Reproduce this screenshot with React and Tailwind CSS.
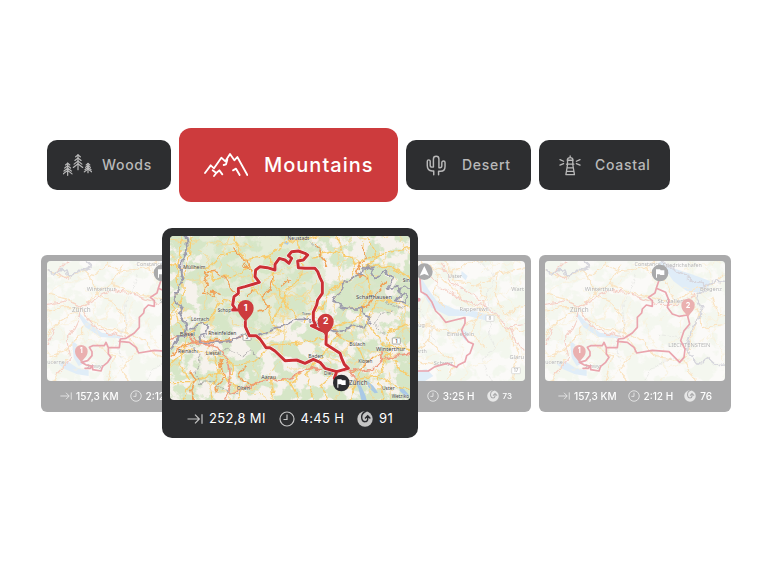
import React from 'react';

/* ---------- helpers for the map drawings ---------- */

function seeded(seed) {
  let s = seed;
  return () => {
    s = (s * 16807) % 2147483647;
    return s / 2147483647;
  };
}

// Short wandering lanes that fill the space between the main roads.
function lanes(seed, count, width, height) {
  const rnd = seeded(seed);
  const out = [];
  for (let i = 0; i < count; i++) {
    let x = rnd() * width;
    let y = rnd() * height;
    let angle = rnd() * Math.PI * 2;
    let d = `M${x.toFixed(0)} ${y.toFixed(0)}`;
    const steps = 4 + Math.floor(rnd() * 6);
    for (let k = 0; k < steps; k++) {
      angle += (rnd() - 0.5) * 1.3;
      x += Math.cos(angle) * 16;
      y += Math.sin(angle) * 16;
      d += `L${x.toFixed(0)} ${y.toFixed(0)}`;
    }
    out.push(d);
  }
  return out.join('');
}

const MAIN_LANES = lanes(77, 85, 720, 492);
const SIDE_LANES = lanes(431, 50, 540, 360);

function MapDefs({ id, frequency }) {
  return (
    <defs>
      <filter id={`${id}-woods`} x="0" y="0" width="100%" height="100%" colorInterpolationFilters="sRGB">
        <feTurbulence type="fractalNoise" baseFrequency={frequency} numOctaves="5" seed="8" result="n" />
        <feColorMatrix in="n" type="matrix" values="0 0 0 0 0.84  0 0 0 0 0.9  0 0 0 0 0.78  11 0 0 0 -4.9" result="g" />
        <feComposite in="g" in2="SourceAlpha" operator="in" />
      </filter>
      <filter id={`${id}-wave`} x="-5%" y="-5%" width="110%" height="110%" colorInterpolationFilters="sRGB">
        <feTurbulence type="fractalNoise" baseFrequency="0.04" numOctaves="3" seed="4" />
        <feDisplacementMap in="SourceGraphic" scale="24" xChannelSelector="R" yChannelSelector="G" />
      </filter>
    </defs>
  );
}

function Pin({ x, y, n, r = 24 }) {
  return (
    <g transform={`translate(${x} ${y})`}>
      <path d={`M0 ${r * 1.85}C${-r * 0.2} ${r * 1.2} ${-r} ${r * 0.9} ${-r} 0A${r} ${r} 0 0 1 ${r} 0C${r} ${r * 0.9} ${r * 0.2} ${r * 1.2} 0 ${r * 1.85}Z`} fill="#cd3b3d" />
      <text y={r * 0.34} textAnchor="middle" fontSize={r * 1.1} fontWeight="700" fill="#fff" fontFamily="Inter, sans-serif">{n}</text>
    </g>
  );
}

function FlagMarker({ x, y }) {
  return (
    <g transform={`translate(${x} ${y})`}>
      <circle r="25" fill="#2c2d30" />
      <path d="M-12 14V-11H0l2 3H13V6H1L-1 4H-9V14Z" fill="#fff" />
    </g>
  );
}

function Badge({ x, y, n, w = 24 }) {
  return (
    <g transform={`translate(${x} ${y})`}>
      <rect x={-w / 2} y="-9" width={w} height="18" rx="2" fill="#fff" stroke="#8b8b86" strokeWidth="2" />
      <text y="5" textAnchor="middle" fontSize="13" fontWeight="700" fill="#555">{n}</text>
    </g>
  );
}

function Labels({ items, fill = '#404040' }) {
  return (
    <g fontFamily="'Noto Sans', sans-serif" fill={fill} stroke="#fff" strokeOpacity="0.6" strokeWidth="2" paintOrder="stroke">
      {items.map(([name, x, y, size, anchor]) => (
        <text key={name} x={x} y={y} fontSize={size} textAnchor={anchor || 'middle'}>{name}</text>
      ))}
    </g>
  );
}

/* ---------- maps ---------- */

const MOUNTAIN_LABELS = [
  ['Müllheim', 73, 98, 15], ['Schopf', 143, 227, 14, 'start'], ['Lörrach', 90, 256, 15],
  ['Basel', 52, 301, 18], ['Rheinfelden', 157, 298, 15], ['Reinach', 52, 350, 15],
  ['Liestal', 130, 358, 15], ['Aarau', 296, 430, 16], ['Olten', 220, 463, 15],
  ['Neustadt', 385, 13, 15], ['Schaffhausen', 612, 190, 17], ['Sin', 698, 138, 15, 'start'],
  ['Tien', 395, 238, 13, 'start'], ['Bülach', 562, 331, 15], ['Winterthur', 662, 345, 17],
  ['Baden', 437, 366, 15], ['Kloten', 586, 382, 14], ['Diet', 462, 417, 14, 'start'],
  ['Zürich', 565, 446, 19], ['Uster', 655, 463, 15], ['Wetziko', 717, 485, 14, 'end'],
];

function MountainsMap() {
  return (
    <svg viewBox="0 0 720 492" className="block w-full rounded-sm" role="img" aria-label="Mountains route map">
      <MapDefs id="mountains" frequency="0.022" />
      <rect width="720" height="492" fill="#f6f2ec" />
      <path d="M95 0H420L470 110 440 240 350 250 240 280 170 270 90 250 80 170Z" fill="#e1ead3" opacity=".8" filter="url(#mountains-wave)" />
      <path d="M500 180L560 120 660 120 640 220 520 230Z" fill="#dbe6cb" filter="url(#mountains-wave)" />
      <rect width="720" height="492" fill="#000" filter="url(#mountains-woods)" />
      <g fill="#a9c9e6">
        <path d="M560 430l12 18 14 30 4 14h-16l-8-34-12-22z" />
        <path d="M592 434l18 16 14 20-10 2-20-20zM688 452l14 8 16 18-10 4-18-16z" />
        <path d="M345 15l12 5-4 6-12-4z" />
      </g>
      <g filter="url(#mountains-wave)" fill="none" strokeLinejoin="round" strokeLinecap="round">
        <path d={MAIN_LANES} stroke="#f7d98f" strokeWidth="2.5" />
        <g stroke="#f8cc6c" strokeWidth="4">
          <path d="M35-5L28 60 20 110 25 160 8 210 0 260M60 0L55 70 38 130 40 175 18 225 25 260 50 290" />
          <path d="M0 85L45 95 110 98 150 60 195 45 230 70 300 60 340 15 390 20 440 0" />
          <path d="M110 98L130 130 190 120 240 90 215 60 190 0M215 200L160 190 120 250 80 270 45 300" />
          <path d="M240 90L250 160 290 200 310 260 330 290M300 60L310 130 340 190 310 260M385 20L400 110 350 160 340 190 380 250" />
          <path d="M430 60L500 45 560 80 640 50 720 35M500 0L520 60 590 95 660 90 720 130M560 80L540 130 480 160 460 210 400 260" />
          <path d="M590 0L620 55 590 95 600 170 560 250 480 275M720 210L620 190 590 260 650 330 720 345" />
          <path d="M0 385L50 340 130 350 190 385 250 380 300 330 400 320 480 300M40 492L60 440 30 380 50 300" />
          <path d="M130 350L150 410 120 450 130 492M190 385L180 440 220 460 300 425 360 440 440 375 500 300 560 325" />
          <path d="M220 460L200 492M300 425L310 492M360 440L390 492M440 375L410 420 430 492M500 405L450 450 470 492" />
          <path d="M560 325L585 375 560 430 620 420 660 345 650 290 720 260M585 375L660 345M560 430L540 492M620 420L680 450 720 460M620 420L640 492" />
          <path d="M660 345L690 400 720 420M0 440L60 440 150 410 180 440" />
        </g>
        <g stroke="#f0a055" strokeWidth="4.5">
          <path d="M195 35L200 55 225 75 222 90 235 100M100 110L140 105 170 130 190 165 205 175M100 110L118 145 98 170 130 182 128 165 150 175" />
          <path d="M310 125L300 160 280 182 295 215 270 225M355 130L335 150M250 160L232 175M230 70L245 110" />
          <path d="M60 405L75 430 62 460 70 492M150 375L160 420 140 445 145 470M225 395L205 425 230 440 260 450" />
          <path d="M575 30L595 60 575 80 560 110 590 130M430 20L450 45 470 90M645 140L620 170 590 210 570 225" />
          <path d="M0 360L40 330 100 310 180 312M510 300L480 270 440 255M610 360L570 400 540 412" />
        </g>
        <g stroke="#ee9c80" strokeWidth="5">
          <path d="M50 290L70 320 120 325 160 345 175 390 180 440 165 492M0 310L50 290 80 312 165 318 235 300" />
          <path d="M535 400L575 405 610 400 640 370 720 350M560 430L540 405 500 410M180 470L240 450 300 430 350 432 420 395 480 408M640 370L635 345" />
        </g>
        <path d="M60 330l25 15 5 40-15 25 15 30 40-5 25 25 55 15M115 350l60-10 40 20 30-15 30 25M670 225l-40 10-20 30 30 25M650 200l50 20 20-15M420 20l30 25" stroke="#a5a4a4" strokeWidth="2.5" strokeDasharray="7 5" />
      </g>
      <g filter="url(#mountains-wave)" fill="none" stroke="#9c9bac" strokeWidth="5" strokeLinejoin="round">
        <path d="M45-5L52 40 35 70 32 110 38 135 25 160 14 185 22 205 40 240 50 275 45 300 25 300 10 335 0 340" strokeWidth="6" />
        <path d="M58 275L85 275 95 260 115 268 108 295 85 300 90 318 150 320 200 310 232 290 262 303 290 285 330 272 380 250 410 250 430 260 450 280 500 290 540 278 550 262 580 275 600 255 590 235" />
        <path d="M600 245L585 235 575 218 535 220 510 215 495 190 510 165 520 140 545 125 575 115 580 95 602 98 615 125 635 120 645 102 665 125 655 155 685 150 695 175 670 190 705 200 705 180 690 165 705 150 720 160" />
      </g>
      <Labels items={MOUNTAIN_LABELS} />
      <Badge x={231} y={304} n="3" />
      <Badge x={679} y={315} n="1" />
      <g fill="none" strokeLinejoin="round" strokeLinecap="round">
        {[['#ffffff', 12], ['#cb3035', 9]].map(([color, w]) => (
          <path
            key={color}
            stroke={color}
            strokeWidth={w}
            d="M226 222H188L195 217 188 207 192 182 205 172V157L225 152 268 139 255 122 257 102 270 92 292 95 315 102V85L328 67 345 72 357 82 365 67 355 59 365 47 385 45 405 52 413 57 400 72 383 75 385 95 405 97H435L443 107 450 125 457 139V172L443 192 440 207 430 229V252L437 268 424 269 445 279 469 289 468 325 510 352 515 367 523 385 535 397 500 407 493 427M500 407L465 397 450 379 430 370 405 382 380 372 345 374 315 345 300 335H288L270 309 258 299H238L226 272V257"
          />
        ))}
      </g>
      <FlagMarker x={514} y={441} />
      <Pin x={227} y={216} n="1" />
      <Pin x={467} y={257} n="2" />
    </svg>
  );
}

const LAKES_LABELS = [
  ['Constance', 308, 14, 16], ['Friedrichshafen', 412, 17, 16], ['Bregenz', 498, 89, 17],
  ['Winterthur', 163, 91, 17], ['Zürich', 103, 152, 19], ['St. Gallen', 377, 127, 18],
  ['ucerne', 1, 308, 16, 'start'], ['LIECHTENSTEIN', 433, 259, 17], ['Schwyz', 145, 322, 15],
];

function AlpineMap({ id }) {
  return (
    <svg viewBox="0 0 540 360" className="block w-full rounded-sm" role="img" aria-label="Alpine route map">
      <MapDefs id={id} frequency="0.02" />
      <rect width="540" height="360" fill="#f6f4ee" />
      <rect width="540" height="360" fill="#000" opacity=".55" filter={`url(#${id}-woods)`} />
      <g fill="#b4d3f0">
        <path d="M350 0L380 20 440 40 495 60 490 80 460 95 425 90 385 60 360 25 340 5Z" />
        <path d="M100 158L125 185 165 215 220 222 220 232 160 228 115 198 95 165Z" />
        <path d="M75 240L90 250 100 290 115 305 95 315 80 290ZM60 300L90 320 125 328 125 345 90 340 55 325 35 310Z" />
      </g>
      <g filter={`url(#${id}-wave)`} fill="none" strokeLinejoin="round" strokeLinecap="round">
        <path d={SIDE_LANES} stroke="#f5dba0" strokeWidth="2" />
        <g stroke="#f4bd6c" strokeWidth="3.5">
          <path d="M0 100L60 110 100 140 130 180 180 205 240 215 300 240 330 290 420 300 440 340 450 360" />
          <path d="M100 140L150 100 190 70 260 95 330 110 390 125 440 90 500 70 540 40M150 100L130 50 180 10 220 30 300 20 330 0" />
          <path d="M0 220L40 180 90 150M0 290L50 270 85 240 110 200M60 300L20 360M190 70L230 10M240 215L230 160 190 120 150 100" />
          <path d="M390 125L360 60 300 20M440 90L460 160 440 230 420 300M540 190L470 200 460 160M240 215L270 270 220 330 250 360" />
          <path d="M0 30L60 50 110 30 130 50M500 110L520 160 540 165M0 150L50 140 100 140M150 250L200 290 180 360" />
        </g>
        <g stroke="#e88b74" strokeWidth="3.5">
          <path d="M0 130L60 120 105 135 150 110 200 85 260 100 340 130 400 130 450 100M105 135L90 180 60 240 70 300 30 340" />
          <path d="M60 55L30 30 60 0M110 145L130 190 180 215 240 230M20 200L0 260" />
        </g>
        <path d="M270 40l-10 50-30 40 10 60-30 60 20 50M300 360l30-50 60-20M340 220l60 10 40-40" stroke="#b6b6b2" strokeWidth="2" strokeDasharray="7 5" />
      </g>
      <g filter={`url(#${id}-wave)`} fill="none" stroke="#9b9aab" strokeWidth="5" strokeLinejoin="round">
        <path d="M0 28L18 42 40 25 58 28 62 48 85 42 95 28 120 30 130 14 115 0M345 0L400 35 435 50 475 70 480 85 450 110 470 140 465 165 445 195 432 235 425 265 445 300 470 305 490 292 515 315 540 312" />
        <path d="M480 75L510 60 540 65" />
      </g>
      <Labels items={LAKES_LABELS} />
      <path
        fill="none"
        stroke="#cb2036"
        strokeWidth="5"
        strokeLinejoin="round"
        strokeLinecap="round"
        d="M344 52L334 82 330 96 310 109 322 119V136L304 132 292 144 290 156 277 169V199L262 216 237 232 220 234 217 260H184L177 244 172 254H137L127 259 135 272V284L122 299 103 304 118 312 137 316V326L162 330 167 316 182 304 192 289 184 279V260M114 322H130L137 314M334 82L362 94 372 119 367 139 382 159 402 166 427 162 434 189 417 209 407 239 420 264 417 289 404 304 384 284 372 272 322 268 275 276 267 259 247 244 217 241"
      />
      <FlagMarker x={345} y={36} />
      <Pin x={103} y={271} n="1" r={19} />
      <Pin x={429} y={133} n="2" r={20} />
    </svg>
  );
}

const LAKESIDE_LABELS = [
  ['Uster', 330, 51, 17], ['Rapperswil', 387, 149, 17], ['Einsiedeln', 347, 226, 17],
  ['Schwyz', 295, 311, 17], ['Glaru', 537, 294, 17, 'end'], ['Wart', 537, 91, 17, 'end'],
  ['Zug', 225, 198, 16], ['Arth', 229, 276, 16],
];

function LakesideMap() {
  return (
    <svg viewBox="0 0 540 360" className="block w-full rounded-sm" role="img" aria-label="Lakeside route map">
      <MapDefs id="lakeside" frequency="0.018" />
      <rect width="540" height="360" fill="#f6f4ee" />
      <rect width="540" height="360" fill="#000" opacity=".6" filter="url(#lakeside-woods)" />
      <g fill="#b4d3f0">
        <path d="M225 45L250 85 275 120 330 145 390 150 440 165 430 180 370 165 310 165 260 140 235 100Z" />
        <path d="M350 30L368 45 362 58 348 45ZM352 205L370 215 362 240 350 225ZM210 330L245 325 265 345 240 360H210Z" />
      </g>
      <g filter="url(#lakeside-wave)" fill="none" strokeLinejoin="round" strokeLinecap="round">
        <path d={SIDE_LANES} stroke="#f5dba0" strokeWidth="2" />
        <g stroke="#f4bd6c" strokeWidth="3.5">
          <path d="M230 0L280 40 330 90 370 130 440 160 480 200 540 215M300 0L330 60 400 70 460 40 540 20M400 70L420 120 400 160 380 220 420 260" />
          <path d="M210 180L260 200 330 215 380 180 410 160M210 270L250 240 280 270 330 300 310 360M260 200L250 240M480 200L520 270 500 360" />
          <path d="M250 20L310 30 370 10 420 0M280 40L270 100 300 140M460 40L450 110 480 160 540 130M210 300L260 310 290 330" />
        </g>
        <g stroke="#e88b74" strokeWidth="3.5">
          <path d="M240 30L290 80 340 110 380 125 430 140 460 175 490 195 510 240 540 270M290 10L320 70 370 90 430 140M480 200L540 190" />
        </g>
        <path d="M400 0l50 50-30 60 30 40-20 60 20 50-40 40 30 60M210 130l40 50 20 60" stroke="#b6b6b2" strokeWidth="2" strokeDasharray="7 5" />
      </g>
      <Labels items={LAKESIDE_LABELS} />
      <Badge x={435} y={172} n="8" />
      <Badge x={513} y={329} n="17" w={26} />
      <circle cx="221" cy="116" r="6" fill="#cb2036" />
      <path
        fill="none"
        stroke="#cb2036"
        strokeWidth="5"
        strokeLinejoin="round"
        strokeLinecap="round"
        d="M225 52L228 92 245 102 260 122 272 150 285 162 302 184 330 177 360 170V187L350 207 355 222 370 242 385 249 375 277 365 284 360 302 340 312 335 319 307 307 270 317 250 330H210"
      />
      <circle cx="238" cy="32" r="25" fill="#2c2d30" />
      <path d="M238 15L252 44 238 39 224 44Z" fill="#fff" />
    </svg>
  );
}

/* ---------- icons ---------- */

function Tree({ x, top, base, half }) {
  const h = base - top;
  const rows = [0.02, 0.22, 0.42, 0.6];
  return (
    <g transform={`translate(${x} ${top})`}>
      <path d={`M0 0V${h}`} />
      {rows.map((t, i) => {
        const w = half * (0.5 + i * 0.17);
        return <path key={t} d={`M${-w} ${h * t + w * 0.8}L0 ${h * t}L${w} ${h * t + w * 0.8}`} />;
      })}
    </g>
  );
}

function WoodsIcon() {
  return (
    <svg viewBox="0 0 87 66" className="h-[22px] w-[29px] shrink-0" fill="none" stroke="currentColor" strokeWidth="3.6" strokeLinecap="round" aria-hidden="true">
      <Tree x={14} top={27} base={64} half={13} />
      <Tree x={45} top={2} base={47} half={14} />
      <Tree x={75} top={28} base={56} half={11} />
    </svg>
  );
}

function MountainsIcon() {
  return (
    <svg viewBox="0 0 132 75" className="h-[25px] w-11 shrink-0" fill="none" stroke="currentColor" strokeWidth="5.5" strokeLinecap="round" strokeLinejoin="round" aria-hidden="true">
      <path d="M3 60L20 37 30 46 52 14 64 25 78 3 91 22 100 12 130 66" />
      <path d="M26 52L37 60 30 69M37 60L46 52 55 64" />
      <path d="M70 20L66 34 59 36M87 52L96 47 107 66" />
    </svg>
  );
}

function DesertIcon() {
  return (
    <svg viewBox="78 72 62 64" className="h-[21px] w-5 shrink-0" fill="none" stroke="currentColor" strokeWidth="4.5" strokeLinecap="round" strokeLinejoin="round" aria-hidden="true">
      <path d="M102 133V121H97Q82 120 82 105V91A4.500 4.500 0 0 1 91 91V103Q91 109 97 109H101V84A8.500 8.500 0 0 1 118 84V111H121Q127 111 127 105V95A4.500 4.500 0 0 1 137 95V107Q137 122 123 122H117V133" />
    </svg>
  );
}

function CoastalIcon() {
  return (
    <svg viewBox="475 72 67 62" className="h-[21px] w-[22px] shrink-0" fill="none" stroke="currentColor" strokeWidth="4" strokeLinecap="round" strokeLinejoin="round" aria-hidden="true">
      <path d="M478 85L489 90M478 102L489 97M539 85L528 90M539 102L528 97" />
      <path d="M509 74V78M500 87Q501 79 509 79Q517 79 518 87ZM501 88V98M517 88V98M498 99H520M501 100L496 131H522L517 100M500 110H518M498 121H520" />
    </svg>
  );
}

function DistanceIcon({ className }) {
  return (
    <svg viewBox="0 0 16 16" className={className} fill="none" stroke="currentColor" strokeWidth="1.2" aria-hidden="true">
      <path d="M.5 8H12M8 3.700L12.300 8 8 12.300M15 3.200V12.800" />
    </svg>
  );
}

function ClockIcon({ className }) {
  return (
    <svg viewBox="0 0 16 16" className={className} fill="none" stroke="currentColor" strokeWidth="1.2" aria-hidden="true">
      <circle cx="8" cy="8" r="7" />
      <path d="M8 3.500V8.500H4.500" />
    </svg>
  );
}

function CurvesIcon({ className }) {
  return (
    <svg viewBox="0 0 16 16" className={className} aria-hidden="true">
      <circle cx="8" cy="8" r="7.700" fill="currentColor" />
      <path d="M9.500 0C5.500 1.500 4 4.500 5 8.200C5.900 11.600 10.500 11.400 10.700 8.200V5.500M8 7.600L10.700 4.800 13.400 7.600" fill="none" stroke="#2c2d30" strokeWidth="1.400" />
    </svg>
  );
}

/* ---------- interface ---------- */

const TABS = [
  { name: 'Woods', Icon: WoodsIcon, box: 'w-[124px] pl-4 gap-2.5' },
  { name: 'Mountains', Icon: MountainsIcon, active: true },
  { name: 'Desert', Icon: DesertIcon, box: 'w-[125px] pl-5 gap-4' },
  { name: 'Coastal', Icon: CoastalIcon, box: 'w-[131px] pl-5 gap-3.5' },
];

function Tab({ name, Icon, active, box }) {
  const look = active
    ? 'h-[74px] w-[219px] gap-4 rounded-xl bg-[#cd3b3d] pl-[25px] text-xl text-white'
    : `h-[50px] rounded-[10px] bg-[#2d2e30] text-sm text-[#b9b9b9] ${box}`;
  return (
    <button type="button" aria-pressed={!!active} className={`flex items-center font-medium tracking-wider ${look}`}>
      <Icon />
      <span>{name}</span>
    </button>
  );
}

function Stat({ Icon, large, small, children }) {
  return (
    <span className={`flex items-center whitespace-nowrap ${large ? 'gap-1.5' : 'gap-1'}`}>
      <Icon className={`shrink-0 text-[#c4c4c4] ${large ? 'size-4' : 'size-3'}`} />
      <span className={small ? 'text-[8px]' : ''}>{children}</span>
    </span>
  );
}

function RouteCard({ map, distance, time, curves, large, className = '' }) {
  const size = large
    ? 'relative z-10 w-64 rounded-[10px] px-2 pt-2'
    : 'w-48 rounded-md px-1.5 pt-1.5 opacity-40';
  const footer = large
    ? 'h-[38px] px-[17px] text-[13px] font-normal tracking-wide'
    : 'h-[31px] px-[13px] text-[10px] font-medium';
  return (
    <article className={`shrink-0 bg-[#2d2e30] text-white ${size} ${className}`}>
      {map}
      <div className={`flex items-center ${footer} ${distance ? 'justify-between' : 'justify-end gap-3'}`}>
        {distance && <Stat Icon={DistanceIcon} large={large}>{distance}</Stat>}
        <Stat Icon={ClockIcon} large={large}>{time}</Stat>
        <Stat Icon={CurvesIcon} large={large} small={!distance}>{curves}</Stat>
      </div>
    </article>
  );
}

export default function App() {
  return (
    <main className="min-h-screen overflow-hidden bg-white px-[41px] pt-32 font-['Inter',sans-serif]">
      <nav className="flex items-center gap-2 pl-1.5" aria-label="Landscape">
        {TABS.map((tab) => <Tab key={tab.name} {...tab} />)}
      </nav>
      <section className="mt-[26px] flex items-center" aria-label="Routes">
        <RouteCard map={<AlpineMap id="alpine-left" />} distance="157,3 KM" time="2:12 H" curves="76" />
        <RouteCard map={<MountainsMap />} distance="252,8 MI" time="4:45 H" curves="91" large className="-ml-[71px]" />
        <RouteCard map={<LakesideMap />} time="3:25 H" curves="73" className="-ml-[79px]" />
        <RouteCard map={<AlpineMap id="alpine-right" />} distance="157,3 KM" time="2:12 H" curves="76" className="ml-2" />
      </section>
    </main>
  );
}
